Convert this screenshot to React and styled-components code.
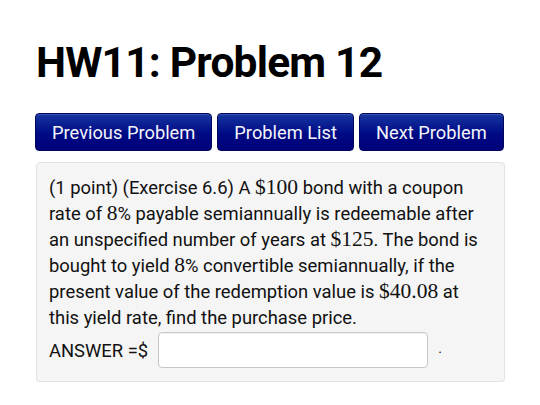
import React from 'react';
import styled, { createGlobalStyle } from 'styled-components';

const GlobalStyle = createGlobalStyle`
  html, body {
    margin: 0;
    padding: 0;
    background: #fff;
  }
  body {
    font-family: Roboto, "Liberation Sans", sans-serif;
    color: #111;
  }
`;

const nav = ['Previous Problem', 'Problem List', 'Next Problem'];

function App() {
  return (
    <>
      <GlobalStyle />
      <Page>
        <Title>HW11: Problem 12</Title>
        <NavBar>
          {nav.map((label) => <NavButton key={label}>{label}</NavButton>)}
        </NavBar>
        <Panel>
          <Statement>
            (1 point) (Exercise 6.6) A <M>$100</M> bond with a coupon<br />
            rate of <M>8</M>% payable semiannually is redeemable after<br />
            an unspecified number of years at <M>$125</M>. The bond is<br />
            bought to yield <M>8</M>% convertible semiannually, if the<br />
            present value of the redemption value is <M>$40.08</M> at<br />
            this yield rate, find the purchase price.
          </Statement>
          <AnswerRow>
            <span>ANSWER =$</span>
            <AnswerInput type="text" />
            <Dot>.</Dot>
          </AnswerRow>
        </Panel>
      </Page>
    </>
  );
}

const Page = styled.div`
  padding: 40px 35px 0 35px;
  width: 470px;
`;

const Title = styled.h1`
  margin: 0 0 27px 1px;
  font-size: 42.5px;
  line-height: 46px;
  font-weight: 700;
  color: #000;
  letter-spacing: -0.8px;
`;

const NavBar = styled.div`
  display: flex;
  gap: 5px;
`;

const NavButton = styled.button`
  height: 38px;
  padding: 0 16px;
  font-family: Roboto, "Liberation Sans", sans-serif;
  font-size: 18.3px;
  color: #f4f4fa;
  border: 1px solid #00065e;
  border-radius: 4px;
  background: linear-gradient(#1636a0, #000a85 55%, #000079);
  box-shadow: inset 0 1px 0 rgba(255, 255, 255, 0.15);
  cursor: pointer;
  white-space: nowrap;
  flex: 0 0 auto;
`;

const Panel = styled.div`
  margin: 11px 0 0 1px;
  width: 443px;
  padding: 12px 12px 13px 12px;
  background: #f5f5f5;
  border: 1px solid #e3e3e3;
  border-radius: 4px;
  box-shadow: 0 1px 1px rgba(0, 0, 0, 0.04);
`;

const Statement = styled.div`
  font-size: 18.4px;
  line-height: 26px;
  color: #111;
  white-space: nowrap;
`;

const M = styled.span`
  font-family: "Liberation Serif", "DejaVu Serif", serif;
  font-size: 21.5px;
  line-height: 0;
`;

const AnswerRow = styled.div`
  display: flex;
  align-items: center;
  margin-top: 1px;
  font-size: 18.4px;
  color: #111;
`;

const AnswerInput = styled.input`
  margin-left: 10px;
  width: 270px;
  height: 36px;
  box-sizing: border-box;
  border: 1px solid #c8c8c8;
  border-radius: 4px;
  background: #fff;
  box-shadow: inset 0 1px 1px rgba(0, 0, 0, 0.06);
`;

const Dot = styled.span`
  margin-left: 10px;
  font-size: 14px;
  padding-bottom: 4px;
`;

export default App;
